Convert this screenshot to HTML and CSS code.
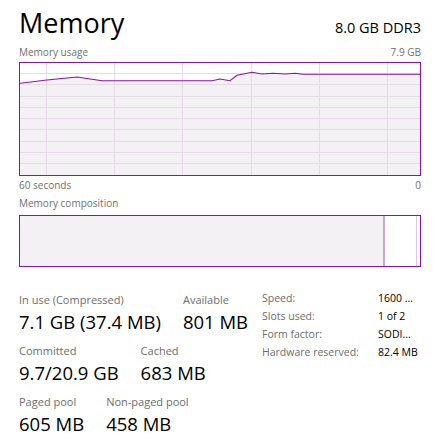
FILE: index.html
```html
<!DOCTYPE html>
<html lang="en">
<head>
<meta charset="utf-8">
<title>Memory</title>
<link rel="stylesheet" href="styles.css">
</head>
<body>
<div class="panel">
  <div class="head">
    <h1 class="title">Memory</h1>
    <span class="spec">8.0 GB DDR3</span>
  </div>
  <div class="caption-row usage-cap"><span>Memory usage</span><span>7.9 GB</span></div>
  <div class="graph">
    <svg class="chart" width="400" height="112" viewBox="0 0 400 112">
      <polygon class="area" points="0,20.3 27,17 57,14 82,17.7 192,17.7 200,16 210,17.7 217,12.3 232,9.3 242,11 253,10.3 265,11 275,10.3 283,11.3 400,11.3 400,112 0,112"/>
      <g class="grid">
        <line x1="0" y1="10.5" x2="400" y2="10.5"/>
        <line x1="0" y1="21.5" x2="400" y2="21.5"/>
        <line x1="0" y1="33.5" x2="400" y2="33.5"/>
        <line x1="0" y1="44.5" x2="400" y2="44.5"/>
        <line x1="0" y1="55.5" x2="400" y2="55.5"/>
        <line x1="0" y1="66.5" x2="400" y2="66.5"/>
        <line x1="0" y1="78.5" x2="400" y2="78.5"/>
        <line x1="0" y1="89.5" x2="400" y2="89.5"/>
        <line x1="0" y1="100.5" x2="400" y2="100.5"/>
        <line x1="26.5" y1="0" x2="26.5" y2="112"/>
        <line x1="94.5" y1="0" x2="94.5" y2="112"/>
        <line x1="162.5" y1="0" x2="162.5" y2="112"/>
        <line x1="231.5" y1="0" x2="231.5" y2="112"/>
        <line x1="299.5" y1="0" x2="299.5" y2="112"/>
        <line x1="367.5" y1="0" x2="367.5" y2="112"/>
      </g>
      <polyline class="usage" points="0,20.3 27,17 57,14 82,17.7 192,17.7 200,16 210,17.7 217,12.3 232,9.3 242,11 253,10.3 265,11 275,10.3 283,11.3 400,11.3"/>
    </svg>
  </div>
  <div class="caption-row axis-cap"><span>60 seconds</span><span>0</span></div>
  <div class="caption-row comp-cap"><span>Memory composition</span></div>
  <div class="composition">
    <div class="seg inuse" style="width:365px"></div>
    <div class="seg standby" style="width:32px"></div>
    <div class="seg free"></div>
  </div>
  <div class="details">
    <div class="stats">
      <div class="stat-row">
        <div class="stat"><div class="label">In use (Compressed)</div><div class="value">7.1 GB (37.4 MB)</div></div>
        <div class="stat"><div class="label">Available</div><div class="value">801 MB</div></div>
      </div>
      <div class="stat-row">
        <div class="stat"><div class="label">Committed</div><div class="value">9.7/20.9 GB</div></div>
        <div class="stat"><div class="label">Cached</div><div class="value">683 MB</div></div>
      </div>
      <div class="stat-row">
        <div class="stat"><div class="label">Paged pool</div><div class="value">605 MB</div></div>
        <div class="stat"><div class="label">Non-paged pool</div><div class="value">458 MB</div></div>
      </div>
    </div>
    <dl class="props">
      <div class="prop"><dt>Speed:</dt><dd>1600 ...</dd></div>
      <div class="prop"><dt>Slots used:</dt><dd>1 of 2</dd></div>
      <div class="prop"><dt>Form factor:</dt><dd>SODI...</dd></div>
      <div class="prop"><dt>Hardware reserved:</dt><dd>82.4 MB</dd></div>
    </dl>
  </div>
</div>
</body>
</html>
```

FILE: styles.css
```css
html, body {
  margin: 0;
  padding: 0;
  background: #ffffff;
}

body {
  font-family: "Open Sans", "Noto Sans", "Liberation Sans", sans-serif;
  color: #000000;
}

.panel {
  width: 402px;
  padding: 6px 19px 0;
}

.head {
  display: flex;
  justify-content: space-between;
  align-items: baseline;
}

.title {
  margin: 0;
  font-size: 27px;
  font-weight: 400;
  line-height: 34px;
}

.spec {
  font-size: 14.5px;
}

.caption-row {
  display: flex;
  justify-content: space-between;
  font-size: 10px;
  line-height: 14px;
  color: #707070;
}

.usage-cap {
  margin-top: 5px;
}

.graph {
  margin-top: 3px;
  height: 112px;
  border: 1px solid #8b12ae;
}

.chart {
  display: block;
}

.area {
  fill: #f4f1f5;
}

.grid line {
  stroke: #e4dbe7;
  stroke-width: 1;
}

.usage {
  fill: none;
  stroke: #8b12ae;
  stroke-width: 1.1;
}

.axis-cap {
  margin-top: 2px;
}

.comp-cap {
  margin-top: 4px;
}

.composition {
  display: flex;
  margin-top: 5px;
  height: 50px;
  border: 1px solid #8b12ae;
}

.seg {
  box-sizing: border-box;
  height: 100%;
}

.inuse {
  background: #f4f1f5;
  border-right: 2px solid #c9a6d4;
}

.standby {
  border-right: 1px solid #dac6e0;
}

.free {
  flex: 1;
}

.details {
  display: flex;
  margin-top: 25px;
}

.stats {
  width: 243px;
  display: flex;
  flex-direction: column;
  gap: 6px;
}

.stat-row {
  display: flex;
  gap: 22px;
}

.label {
  font-size: 11px;
  line-height: 15px;
  color: #6d6d6d;
}

.value {
  font-size: 18.5px;
  line-height: 30px;
}

.props {
  margin: -3px 0 0;
  display: flex;
  flex-direction: column;
}

.prop {
  display: flex;
  font-size: 10.5px;
  line-height: 18px;
}

.prop dt {
  width: 116px;
  color: #6d6d6d;
}

.prop dd {
  margin: 0;
}
```
